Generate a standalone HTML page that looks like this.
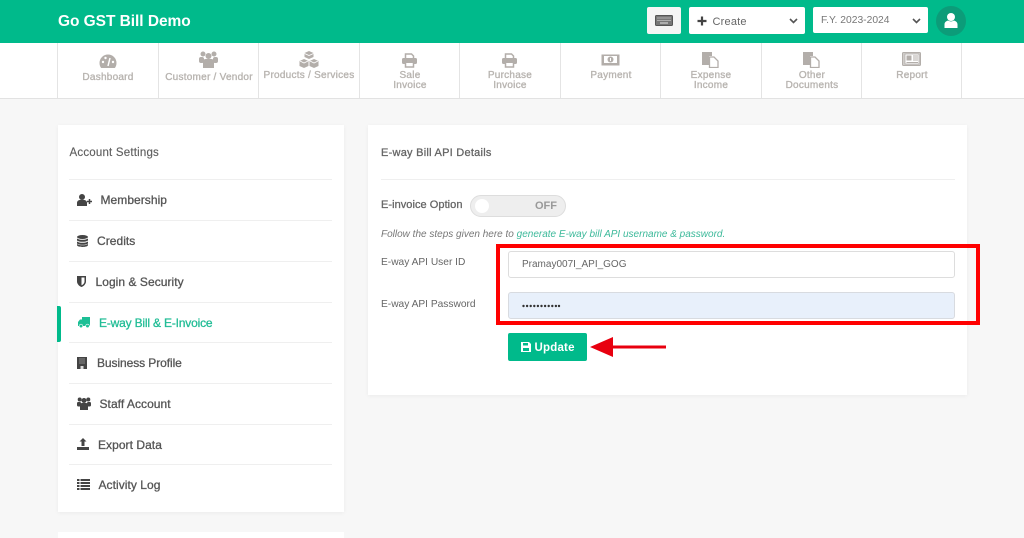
<!DOCTYPE html>
<html><head><meta charset="utf-8"><style>
*{box-sizing:border-box}
html,body{margin:0;padding:0;width:1024px;height:538px;overflow:hidden}
body{position:relative;background:#f7f7f7;font-family:"Liberation Sans",sans-serif;color:#555}
.a{position:absolute}
.t{position:absolute;white-space:nowrap;line-height:14px}
.s{-webkit-text-stroke-width:.3px}
.c{position:absolute;text-align:center;white-space:nowrap;font-size:10px;line-height:10px;color:#b8b4b0;-webkit-text-stroke-width:.35px;letter-spacing:.25px}
.v{position:absolute;top:43px;width:1px;height:55px;background:#e4e4e4}
.m{position:absolute;left:97px;font-size:12px;color:#555;white-space:nowrap;line-height:14px;-webkit-text-stroke-width:.3px;letter-spacing:.05px}
.hr{position:absolute;left:69px;width:263px;height:1px;background:#efefef}
svg{position:absolute;display:block}
</style></head><body>
<div class="a" style="left:0;top:0;width:1024px;height:43px;background:#00ba8b"></div>
<div class="t" style="left:58px;top:13px;font-size:15.500px;line-height:18px;color:#fff;font-weight:bold;letter-spacing:-.05px">Go GST Bill Demo</div>

<div class="a" style="left:647px;top:7px;width:34px;height:27px;background:#f5f5f5;border-radius:2px"></div>
<svg style="left:655px;top:15px" width="18" height="12" viewBox="0 0 18 12"><rect x=".5" y=".5" width="17" height="10" rx="1" fill="#777" stroke="#555"/><path d="M2.500 3h13M2.500 5.500h13" stroke="#e4e4e4" stroke-width="1" stroke-dasharray="1 1"/><path d="M5 8h8" stroke="#e4e4e4" stroke-width="1"/></svg>
<div class="a" style="left:689px;top:7px;width:116px;height:27px;background:#fff;border-radius:2px"></div>
<svg style="left:697px;top:16px" width="10" height="10" viewBox="0 0 10 10"><path d="M5 .5v9M.5 5h9" stroke="#444" stroke-width="2.200"/></svg>
<div class="t" style="left:712.500px;top:15px;font-size:11px;color:#666;letter-spacing:.2px">Create</div>
<svg style="left:789px;top:18px" width="9" height="6" viewBox="0 0 9 6"><path d="M1 1l3.500 3.500L8 1" fill="none" stroke="#555" stroke-width="1.600"/></svg>
<div class="a" style="left:813px;top:7px;width:115px;height:26px;background:#fff;border-radius:2px"></div>
<div class="t" style="left:821px;top:14px;font-size:10.300px;color:#777">F.Y. 2023-2024</div>
<svg style="left:912px;top:18px" width="9" height="6" viewBox="0 0 9 6"><path d="M1 1l3.500 3.500L8 1" fill="none" stroke="#555" stroke-width="1.600"/></svg>
<div class="a" style="left:936px;top:6px;width:30px;height:30px;border-radius:50%;background:#0c9c79"></div>
<svg style="left:944px;top:12px" width="14" height="17" viewBox="0 0 14 17"><circle cx="7" cy="5" r="4" fill="#fff"/><path d="M.5 16v-3.500C.5 10 2.500 9 4 8.500c1.800 1.200 4.200 1.200 6 0 1.500.5 3.500 1.500 3.500 4V16z" fill="#fff"/></svg>

<div class="a" style="left:0;top:43px;width:1024px;height:55px;background:#fff"></div>
<div class="a" style="left:0;top:98px;width:1024px;height:1px;background:#e2e2e2"></div>
<div class="v" style="left:57px"></div><div class="v" style="left:158px"></div><div class="v" style="left:258px"></div><div class="v" style="left:359px"></div><div class="v" style="left:459px"></div><div class="v" style="left:560px"></div><div class="v" style="left:660px"></div><div class="v" style="left:761px"></div><div class="v" style="left:861px"></div><div class="v" style="left:961px"></div>

<svg style="left:99px;top:54px" width="18" height="15" viewBox="0 0 18 15"><path d="M9 .5a8.500 8.500 0 0 0-8.500 8.500c0 2 .6 3.700 1.700 5h13.600c1.100-1.300 1.700-3 1.700-5A8.500 8.500 0 0 0 9 .5z" fill="#b3aeaa"/><path d="M9 12L11 4" stroke="#fff" stroke-width="1.500"/><circle cx="4" cy="8" r="1.200" fill="#fff"/><circle cx="6.500" cy="4" r="1.200" fill="#fff"/><circle cx="14" cy="8" r="1.200" fill="#fff"/></svg>
<div class="c" style="left:58px;width:100px;top:73px">Dashboard</div>
<svg style="left:199px;top:51px" width="19" height="18" viewBox="0 0 19 18" fill="#b3aeaa"><circle cx="4" cy="3" r="2.500"/><circle cx="15" cy="3" r="2.500"/><circle cx="9.500" cy="5" r="3"/><rect x="0" y="6" width="5" height="6" rx="2"/><rect x="14" y="6" width="5" height="6" rx="2"/><path d="M4 10c0-1.500 1.500-2 3-2h5c1.500 0 3 .5 3 2v7H4z"/></svg>
<div class="c" style="left:159px;width:100px;top:73px">Customer / Vendor</div>
<svg style="left:299px;top:51px" width="20" height="17" viewBox="0 0 20 17" fill="#b3aeaa"><path d="M10 0l4.500 2v4L10 8 5.500 6V2z"/><path d="M5 8l4.500 2v5L5 17 .5 15v-5z"/><path d="M15 8l4.500 2v5L15 17l-4.500-2v-5z"/><path d="M5.500 2.500L10 4.500l4.500-2M1 10l4 2 4-2M11 10l4 2 4-2" fill="none" stroke="#fff" stroke-width=".8"/></svg>
<div class="c" style="left:259px;width:100px;top:71px">Products / Services</div>
<svg style="left:402px;top:53px" width="15" height="15" viewBox="0 0 15 15"><path d="M3.500 5V1h6l2 2v2" fill="none" stroke="#b3aeaa" stroke-width="1.500"/><rect x="0" y="5" width="15" height="6" rx="1.500" fill="#b3aeaa"/><path d="M3.500 10v4h8v-4" fill="#fff" stroke="#b3aeaa" stroke-width="1.500"/></svg>
<div class="c" style="left:360px;width:100px;top:71px">Sale</div><div class="c" style="left:360px;width:100px;top:81px">Invoice</div>
<svg style="left:502px;top:53px" width="15" height="15" viewBox="0 0 15 15"><path d="M3.500 5V1h6l2 2v2" fill="none" stroke="#b3aeaa" stroke-width="1.500"/><rect x="0" y="5" width="15" height="6" rx="1.500" fill="#b3aeaa"/><path d="M3.500 10v4h8v-4" fill="#fff" stroke="#b3aeaa" stroke-width="1.500"/></svg>
<div class="c" style="left:460px;width:100px;top:71px">Purchase</div><div class="c" style="left:460px;width:100px;top:81px">Invoice</div>
<svg style="left:601px;top:54px" width="19" height="12" viewBox="0 0 19 12"><rect width="18" height="11" x=".5" y=".5" fill="#b3aeaa"/><rect x="3" y="2" width="13" height="7" fill="#fff"/><circle cx="9.500" cy="5.500" r="3" fill="#b3aeaa"/><path d="M9.500 4v3" stroke="#fff"/></svg>
<div class="c" style="left:561px;width:100px;top:71px">Payment</div>
<svg style="left:702px;top:51px" width="17" height="17" viewBox="0 0 17 17"><path d="M0 1h10v4H7v9H0z" fill="#b3aeaa"/><path d="M7.500 6H12l4 4v6.500H7.500z" fill="#fff" stroke="#b3aeaa" stroke-width="1.300"/></svg>
<div class="c" style="left:661px;width:100px;top:71px">Expense</div><div class="c" style="left:661px;width:100px;top:81px">Income</div>
<svg style="left:803px;top:51px" width="17" height="17" viewBox="0 0 17 17"><path d="M0 1h10v4H7v9H0z" fill="#b3aeaa"/><path d="M7.500 6H12l4 4v6.500H7.500z" fill="#fff" stroke="#b3aeaa" stroke-width="1.300"/></svg>
<div class="c" style="left:762px;width:100px;top:71px">Other</div><div class="c" style="left:762px;width:100px;top:81px">Documents</div>
<svg style="left:902px;top:52px" width="19" height="14" viewBox="0 0 19 14"><rect x=".5" y=".5" width="18" height="13" rx="1" fill="#d0cdca" stroke="#b3aeaa"/><rect x="3" y="2" width="14" height="10" fill="#fff" stroke="#b3aeaa" stroke-width=".8"/><rect x="4.500" y="3.500" width="5" height="5" fill="#b3aeaa"/><path d="M11 4h5M11 6h5M11 8h5M4.500 10.500h11.500" stroke="#b3aeaa"/></svg>
<div class="c" style="left:862px;width:100px;top:71px">Report</div>

<div class="a" style="left:58px;top:125px;width:286px;height:387px;background:#fff;box-shadow:0 1px 4px rgba(0,0,0,.05)"></div>
<div class="a" style="left:58px;top:532px;width:286px;height:6px;background:#fff"></div>
<div class="t s" style="left:69.500px;top:146px;font-size:11.500px;color:#5f5f5f;letter-spacing:.2px;-webkit-text-stroke-width:.15px">Account Settings</div>
<div class="hr" style="top:179px"></div><div class="hr" style="top:220px"></div><div class="hr" style="top:261px"></div><div class="hr" style="top:302px"></div><div class="hr" style="top:342px"></div><div class="hr" style="top:383px"></div><div class="hr" style="top:424px"></div><div class="hr" style="top:464px"></div>
<div class="a" style="left:57px;top:306px;width:4px;height:36px;background:#00ba8b;border-radius:0 2px 2px 0"></div>

<svg style="left:77px;top:194px" width="15" height="12" viewBox="0 0 15 12" fill="#444"><circle cx="5" cy="3" r="3"/><path d="M0 12V9c0-2 1.500-3 3-3h4c1.500 0 3 1 3 3v3z"/><path d="M10 7.500h5M12.500 5v5" stroke="#444" stroke-width="1.500"/></svg>
<div class="m" style="left:100.500px;top:193px">Membership</div>
<svg style="left:77px;top:235px" width="11" height="12" viewBox="0 0 11 12" fill="#444"><ellipse cx="5.500" cy="2" rx="5.500" ry="2"/><path d="M0 3.500c2 1.700 9 1.700 11 0V5.500c-2 1.700-9 1.700-11 0zM0 6.500c2 1.700 9 1.700 11 0V8.500c-2 1.700-9 1.700-11 0zM0 9c2 1.700 9 1.700 11 0v1c0 2.600-11 2.600-11 0z"/></svg>
<div class="m" style="top:234px">Credits</div>
<svg style="left:77px;top:276px" width="9" height="11" viewBox="0 0 9 11"><path d="M0 0h9v5.500C9 8.500 6 10.500 4.500 11 3 10.500 0 8.500 0 5.500z" fill="#444"/><path d="M4.500 1.500H7.500v4C7.500 7.500 5.500 9 4.500 9.300z" fill="#fff"/></svg>
<div class="m" style="left:95.500px;top:275px">Login &amp; Security</div>
<svg style="left:78px;top:317px" width="12" height="11" viewBox="0 0 12 11" fill="#1cbf95"><path d="M4 0h8v9H4zM0 5l2-2.500h2V9H0z"/><circle cx="3" cy="9" r="1.800" stroke="#fff" stroke-width=".6"/><circle cx="9.500" cy="9" r="1.800" stroke="#fff" stroke-width=".6"/></svg>
<div class="m" style="left:99px;top:316px;color:#22bd96;letter-spacing:-.18px">E-way Bill &amp; E-Invoice</div>
<svg style="left:77px;top:357px" width="10" height="12" viewBox="0 0 10 12"><rect width="10" height="12" fill="#444"/><path d="M2 2h6M2 4h6M2 6h6" stroke="#888" stroke-width="1"/><rect x="3.500" y="9" width="3" height="3" fill="#ddd"/></svg>
<div class="m" style="top:356px;letter-spacing:-.08px">Business Profile</div>
<svg style="left:77px;top:397px" width="14" height="13" viewBox="0 0 14 13" fill="#444"><circle cx="2.700" cy="2.500" r="2"/><circle cx="11.300" cy="2.500" r="2"/><circle cx="7" cy="3.500" r="2.500"/><rect x="0" y="5" width="4" height="4.500" rx="1.200"/><rect x="10" y="5" width="4" height="4.500" rx="1.200"/><path d="M3 8c0-1 1-2 2-2h4c1 0 2 1 2 2v5H3z"/></svg>
<div class="m" style="left:99.500px;top:397px">Staff Account</div>
<svg style="left:77px;top:438px" width="12" height="12" viewBox="0 0 12 12" fill="#444"><path d="M6 0L9.500 3.500H7.500V8h-3V3.500H2.500z"/><path d="M0 9h12v3H0z"/></svg>
<div class="m" style="left:98px;top:438px">Export Data</div>
<svg style="left:77px;top:479px" width="13" height="11" viewBox="0 0 13 11" fill="#444"><path d="M0 0h2.500v2H0zM3.500 0H13v2H3.500zM0 3h2.500v2H0zM3.500 3H13v2H3.500zM0 6h2.500v2H0zM3.500 6H13v2H3.500zM0 9h2.500v2H0zM3.500 9H13v2H3.500z"/></svg>
<div class="m" style="left:98.500px;top:478px">Activity Log</div>

<div class="a" style="left:368px;top:125px;width:599px;height:270px;background:#fff;box-shadow:0 1px 4px rgba(0,0,0,.05)"></div>
<div class="t s" style="left:381px;top:146px;font-size:11px;color:#666;letter-spacing:.25px">E-way Bill API Details</div>
<div class="a" style="left:381px;top:179px;width:574px;height:1px;background:#efefef"></div>
<div class="t s" style="left:381px;top:198px;font-size:11px;color:#666;letter-spacing:.05px">E-invoice Option</div>
<div class="a" style="left:470px;top:195px;width:96px;height:22px;border-radius:11px;background:#eee;border:1px solid #ddd"></div>
<div class="a" style="left:475px;top:198.500px;width:14px;height:14px;border-radius:50%;background:#fff"></div>
<div class="t" style="left:535px;top:198.500px;font-size:11px;font-weight:bold;color:#999">OFF</div>
<div class="t" style="left:381px;top:227.500px;font-size:10px;font-style:italic;color:#777">Follow the steps given here to <span style="color:#3cb99a">generate E-way bill API username &amp; password.</span></div>
<div class="t" style="left:381px;top:256px;font-size:10.200px;color:#666">E-way API User ID</div>
<div class="t" style="left:381px;top:298px;font-size:10.200px;color:#666">E-way API Password</div>

<div class="a" style="left:508px;top:251px;width:447px;height:27px;background:#fff;border:1px solid #ddd;border-radius:3px"></div>
<div class="t" style="left:522px;top:258px;font-size:10px;color:#666">Pramay007I_API_GOG</div>
<div class="a" style="left:508px;top:292px;width:447px;height:27px;background:#e8f0fb;border:1px solid #d8dbe0;border-radius:3px"></div>
<svg style="left:522px;top:304px" width="40" height="4" viewBox="0 0 40 4" fill="#333"><circle cx="1.500" cy="2" r="1.200"/><circle cx="5.100" cy="2" r="1.200"/><circle cx="8.700" cy="2" r="1.200"/><circle cx="12.300" cy="2" r="1.200"/><circle cx="15.900" cy="2" r="1.200"/><circle cx="19.500" cy="2" r="1.200"/><circle cx="23.100" cy="2" r="1.200"/><circle cx="26.700" cy="2" r="1.200"/><circle cx="30.300" cy="2" r="1.200"/><circle cx="33.900" cy="2" r="1.200"/><circle cx="37" cy="2" r="1.200"/></svg>
<div class="a" style="left:496px;top:244px;width:484px;height:81px;border:4px solid #f00"></div>

<div class="a" style="left:508px;top:333px;width:79px;height:28px;background:#00ba8b;border-radius:2px"></div>
<svg style="left:521px;top:342px" width="10" height="10" viewBox="0 0 10 10"><path d="M0 0h8l2 2v8H0z" fill="#fff"/><rect x="2" y="1" width="5" height="2.500" fill="#00ba8b"/><rect x="2" y="6" width="6" height="3" fill="#00ba8b"/></svg>
<div class="t" style="left:534.500px;top:341px;font-size:11.500px;font-weight:bold;color:#fff;letter-spacing:.2px">Update</div>
<svg style="left:588px;top:334px" width="80" height="26" viewBox="0 0 80 26"><path d="M2 13L25 3v8.500h53v3H25V23z" fill="#e8000f"/></svg>
</body></html>
